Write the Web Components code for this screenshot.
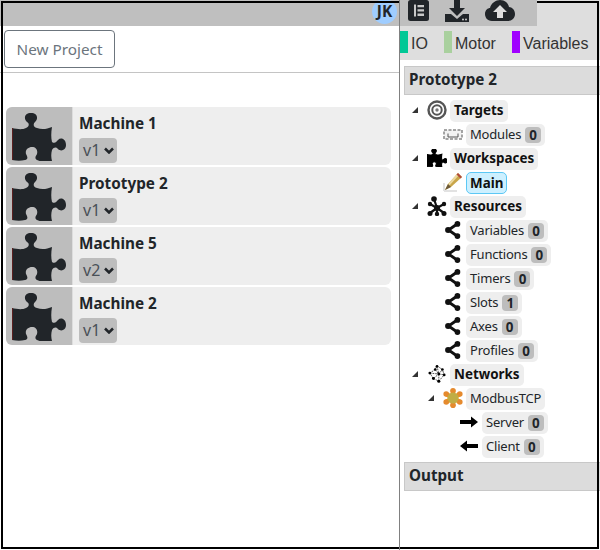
<!DOCTYPE html>
<html>
<head>
<meta charset="utf-8">
<style>
  html, body { margin: 0; padding: 0; background: #fff; }
  body { font-family: "Noto Sans", sans-serif; color: #212529; }
</style>
</head>
<body>
<app-shell>
  <project-list slot="left">
    <project-card name="Machine 1" version="v1"></project-card>
    <project-card name="Prototype 2" version="v1"></project-card>
    <project-card name="Machine 5" version="v2"></project-card>
    <project-card name="Machine 2" version="v1"></project-card>
  </project-list>
  <side-panel slot="right" title="Prototype 2">
    <tree-row level="0" open icon="target" label="Targets" strong></tree-row>
    <tree-row level="1" icon="module" label="Modules" count="0"></tree-row>
    <tree-row level="0" open icon="piece" label="Workspaces" strong></tree-row>
    <tree-row level="1" icon="pencil" label="Main" strong selected></tree-row>
    <tree-row level="0" open icon="hub" label="Resources" strong></tree-row>
    <tree-row level="1" icon="share" label="Variables" count="0"></tree-row>
    <tree-row level="1" icon="share" label="Functions" count="0"></tree-row>
    <tree-row level="1" icon="share" label="Timers" count="0"></tree-row>
    <tree-row level="1" icon="share" label="Slots" count="1"></tree-row>
    <tree-row level="1" icon="share" label="Axes" count="0"></tree-row>
    <tree-row level="1" icon="share" label="Profiles" count="0"></tree-row>
    <tree-row level="0" open icon="mesh" label="Networks" strong></tree-row>
    <tree-row level="1" open icon="flower" label="ModbusTCP"></tree-row>
    <tree-row level="2" icon="right" label="Server" count="0"></tree-row>
    <tree-row level="2" icon="left" label="Client" count="0"></tree-row>
  </side-panel>
</app-shell>

<script>
const PUZZLE = 'M0 15 C5 16 10 17 14 15 C18 13 17 10 15 9 C11 5 13 0 19 0 C25 0 27 5 23 9 C21 11 21 14 25 15 C30 17 35 16 40 14 C39 20 39 25 40 29 C43 31 44 29 46 27 C49 24 54 26 54 32 C54 37 49 39 46 36 C44 34 42 34 40 37 C39 41 39 44 40 48 C34 49 29 49 25 47 C22 45 24 43 25 41 C26 37 24 34 20 34 C16 34 13 37 14 41 C15 43 17 46 13 47 C9 48 5 48 0 47 Z';

const ICONS = {
  puzzle: `<svg viewBox="0 0 54 48" width="54" height="48"><path fill="#212529" d="${PUZZLE}"/><path d="M.5 15V47" stroke="#5a2020"/></svg>`,
  piece: `<svg viewBox="0 0 54 48" width="21" height="18"><path fill="#000" stroke="#000" stroke-width="3" d="${PUZZLE}"/></svg>`,
  book: `<svg viewBox="0 0 21 21" width="21" height="21"><rect width="21" height="21" rx="2.500" fill="#212529"/><path d="M6 4.500h2v12H6zM9.500 5h6.500v2.300H9.500zM9.500 9.300h6.500v2.300H9.500zM9.500 13.600h6.500v2.300H9.500z" fill="#c8c8c8"/></svg>`,
  download: `<svg viewBox="0 0 24 22" width="24" height="22"><path fill="#212529" d="M9 0h6v8h5l-8 8-8-8h5z"/><path fill="#212529" d="M0 14h6l6 5 6-5h6v8H0z"/><circle cx="18" cy="19.500" r="1" fill="#ccc"/><circle cx="21" cy="19.500" r="1" fill="#ccc"/></svg>`,
  cloud: `<svg viewBox="0 0 30 21" width="30" height="21"><path fill="#212529" d="M7 21 C2 21 0 17 0 14 C0 10 3 8 5 8 C6 3 11 0 15 0 C20 0 23 3 24 7 C27 7 30 10 30 14 C30 18 27 21 23 21 Z"/><path fill="#ddd" d="M15 5 L22 12 H18 V18 H12 V12 H8 Z"/></svg>`,
  target: `<svg viewBox="0 0 20 20" width="20" height="20"><circle cx="10" cy="10" r="8.500" fill="none" stroke="#555" stroke-width="2.400"/><circle cx="10" cy="10" r="4.700" fill="none" stroke="#555" stroke-width="2"/><circle cx="10" cy="10" r="1.700" fill="#777"/></svg>`,
  module: `<svg viewBox="0 0 20 11" width="20" height="11"><rect x="1" y="1" width="18" height="9" fill="#f2f2f2" stroke="#888" stroke-width="1.500" stroke-dasharray="3 1.500"/><path d="M5 8h10M5 8V4.500M15 8V4.500" stroke="#555" fill="none"/></svg>`,
  hub: `<svg viewBox="0 0 20 20" width="20" height="20"><path stroke="#111" stroke-width="2.200" d="M7 3 10 12M10 12 3 8M10 12 17 8M10 12 3 17M10 12 17 17M10 12 10 18"/><g fill="#111"><circle cx="7" cy="3" r="2.800"/><circle cx="10" cy="12" r="3"/><circle cx="3" cy="8" r="2.200"/><circle cx="17" cy="8" r="2.200"/><circle cx="3" cy="17.500" r="2.500"/><circle cx="17" cy="17.500" r="2.500"/><circle cx="10" cy="18" r="2.200"/></g></svg>`,
  pencil: `<svg viewBox="0 0 20 20" width="20" height="20"><path d="M1 19h13M1 11v8" stroke="#e2e2e2" stroke-width="2"/><path d="M2 18 5 12 15 1 19 5 8 15z" fill="#c9a64a"/><path d="M5 12 15 1l1.500 1.500L6.500 13.500z" fill="#ecd9a0"/><path d="M2 18 5 12 8 15z" fill="#6d5a3a"/><path d="M15 1 19 5 17.500 6.500 13.500 2.500z" fill="#b04a3a"/></svg>`,
  share: `<svg viewBox="0 0 18 20" width="16" height="18"><path stroke="#111" stroke-width="3.200" fill="none" d="M14 3 4 10 14 17"/><circle cx="14" cy="3.200" r="3.200" fill="#111"/><circle cx="3.500" cy="10" r="3.400" fill="#111"/><circle cx="14" cy="16.800" r="3.200" fill="#111"/></svg>`,
  mesh: `<svg viewBox="0 0 20 20" width="18" height="18"><path stroke="#444" stroke-width="1" stroke-dasharray="2 1" fill="none" d="M10 1 16 5 18 11 12 18 6 15 2 9 8 5zM8 5 12 10 6 15M12 10 16 5M12 10 18 11M12 10 12 18M2 9 12 10M10 1 12 10"/><g fill="#000"><circle cx="10" cy="1.500" r="1.500"/><circle cx="16" cy="5" r="1.500"/><circle cx="18" cy="11" r="1.500"/><circle cx="12" cy="18" r="1.700"/><circle cx="6" cy="15" r="1.600"/><circle cx="2" cy="9" r="1.500"/><circle cx="12" cy="10" r="1.600"/><circle cx="8" cy="5" r="1.500"/></g></svg>`,
  flower: `<svg viewBox="0 0 20 20" width="20" height="20"><path stroke="#e8a020" stroke-width="4.500" d="M10 2V18M3 6 17 14M3 14 17 6"/><g fill="#e58a2e"><circle cx="10" cy="2.800" r="2.800"/><circle cx="10" cy="17.200" r="2.800"/><circle cx="3.200" cy="6" r="2.800"/><circle cx="16.800" cy="6" r="2.800"/><circle cx="3.200" cy="14" r="2.800"/><circle cx="16.800" cy="14" r="2.800"/></g><circle cx="10" cy="10" r="5.500" fill="#c0ad45"/></svg>`,
  right: `<svg viewBox="0 0 18 12" width="18" height="12"><path fill="#000" d="M0 4h11V.5L18 6l-7 5.500V8H0z"/></svg>`,
  left: `<svg viewBox="0 0 18 12" width="18" height="12"><path fill="#000" d="M18 4H7V.5L0 6l7 5.500V8h11z"/></svg>`
};

// page frame with the two columns, the black outline goes over them
class AppShell extends HTMLElement {
  constructor () {
    super();
    this.attachShadow({mode: 'open'});
    this.shadowRoot.innerHTML = `
      <style>
        :host { display: grid; grid-template-columns: 400px 1fr; width: 600px; height: 550px; position: relative; overflow: hidden; }
        .left, .right { min-width: 0; }
        .outline { position: absolute; left: 1px; top: 1px; width: 598px; height: 548px; box-sizing: border-box; border: 2px solid #000; pointer-events: none; }
        .divider { position: absolute; left: 399px; top: 0; bottom: 0; width: 1px; background: #808080; }
      </style>
      <div class="left"><slot name="left"></slot></div>
      <div class="right"><slot name="right"></slot></div>
      <div class="outline"></div>
      <div class="divider"></div>
    `;
  }
}

class ProjectList extends HTMLElement {
  constructor () {
    super();
    this.attachShadow({mode: 'open'});
    this.shadowRoot.innerHTML = `
      <style>
        :host { display: block; }
        .bar { height: 26px; background: #bfbfbf; display: flex; justify-content: flex-end; }
        .avatar { width: 25px; height: 25px; margin: -1px 3px 0 0; border-radius: 50%; background: #9fcdff; color: #212529; font: bold 15.5px/24px "Noto Sans", sans-serif; text-align: center; }
        .actions { height: 47px; box-sizing: border-box; padding: 4px 4px; border-bottom: 1px solid #c4c4c4; }
        button { display: block; width: 111px; height: 38px; padding: 0; background: #fff; border: 1px solid #6c757d; border-radius: 4px; color: #6c757d; font: 15.3px "Noto Sans", sans-serif; }
        .cards { display: flex; flex-direction: column; gap: 2px; padding: 34px 9px 0 6px; }
      </style>
      <div class="bar"><div class="avatar">JK</div></div>
      <div class="actions"><button>New Project</button></div>
      <div class="cards"><slot></slot></div>
    `;
  }
}

class ProjectCard extends HTMLElement {
  constructor () {
    super();
    this.attachShadow({mode: 'open'});
    this.shadowRoot.innerHTML = `
      <style>
        :host { display: flex; height: 58px; background: #eee; border-radius: 6px; overflow: hidden; }
        .thumb { width: 66px; flex: none; background: #bdbdbd; border-right: 1px solid #ddd; display: flex; align-items: center; justify-content: center; }
        .thumb svg { display: block; margin-top: 2px; }
        .body { padding: 6px 0 0 6px; }
        .name { font: bold 15.3px/20px "Noto Sans", sans-serif; color: #212529; }
        .ver { display: flex; align-items: center; gap: 4px; width: 38px; height: 25px; margin-top: 5px; box-sizing: border-box; padding: 0 0 2px 4px; background: #bdbdbd; border-radius: 4px; color: #495057; font: 16px "Noto Sans", sans-serif; }
        .ver svg { display: block; margin-top: 2px; }
      </style>
      <div class="thumb">${ICONS.puzzle}</div>
      <div class="body">
        <div class="name">${this.getAttribute('name')}</div>
        <div class="ver">${this.getAttribute('version')}<svg viewBox="0 0 10 7" width="10" height="7"><path d="M1 1.500 5 5.500 9 1.500" fill="none" stroke="#212529" stroke-width="2.500"/></svg></div>
      </div>
    `;
  }
}

// toolbar, palette and the tree with the output header below it
class SidePanel extends HTMLElement {
  constructor () {
    super();
    this.attachShadow({mode: 'open'});
    this.shadowRoot.innerHTML = `
      <style>
        :host { display: block; }
        .top { background: #dedede; height: 60px; }
        .tools { width: 137px; height: 26px; background: #bfbfbf; display: flex; gap: 16px; padding-left: 8px; box-sizing: border-box; position: relative; z-index: 1; }
        .tools span { display: block; height: 22px; }
        .tools svg { display: block; }
        .chips { display: flex; height: 34px; padding-top: 5px; box-sizing: border-box; font: 16px/26px "Liberation Sans", sans-serif; color: #333; }
        .chip { display: flex; gap: 3px; }
        .chip i { display: block; width: 8px; height: 22px; }
        .head { margin: 6px 0 0 4px; height: 29px; box-sizing: border-box; background: #dcdcdc; border: 1px solid #c8c8c8; border-right: 0; padding-left: 4px; font: bold 15.2px/25px "Noto Sans", sans-serif; color: #212529; }
        .tree { display: flex; flex-direction: column; gap: 2px; height: 367px; box-sizing: border-box; padding-top: 5px; }
      </style>
      <div class="top">
        <div class="tools"><span>${ICONS.book}</span><span>${ICONS.download}</span><span>${ICONS.cloud}</span></div>
        <div class="chips">
          <div class="chip" style="width:44px"><i style="background:#00c896"></i>IO</div>
          <div class="chip" style="width:68px"><i style="background:#a9d09e"></i>Motor</div>
          <div class="chip"><i style="background:#a000ff"></i>Variables</div>
        </div>
      </div>
      <div class="head">${this.getAttribute('title')}</div>
      <div class="tree"><slot></slot></div>
      <div class="head" style="margin-top:0">Output</div>
    `;
  }
}

class TreeRow extends HTMLElement {
  constructor () {
    super();
    this.attachShadow({mode: 'open'});
    const level = Number(this.getAttribute('level'));
    const count = this.getAttribute('count');
    const arrow = this.hasAttribute('open') ? '<svg viewBox="0 0 6 6" width="6" height="6"><path d="M6 0V6H0z" fill="#333"/></svg>' : '';
    this.shadowRoot.innerHTML = `
      <style>
        :host { display: flex; align-items: center; height: 22px; padding-left: ${12 + level * 16}px; font: 13px/16px "Noto Sans", sans-serif; letter-spacing: -0.2px; color: #212529; }
        .arrow { width: 6px; flex: none; display: flex; margin-top: -2px; }
        .icon { width: 20px; margin: -2px 0 0 9px; flex: none; display: flex; justify-content: center; align-items: center; }
        .icon svg { display: block; }
        .pill { display: flex; align-items: center; gap: 4px; height: 22px; margin-left: 3px; padding: 0 4px 2px; box-sizing: border-box; background: #eee; border-radius: 5px; white-space: nowrap; }
        :host([strong]) { font-size: 13.4px; letter-spacing: 0; }
        :host([strong]) .pill { font-weight: bold; color: #111; }
        :host([selected]) .pill { background: #cdf0ff; border: 1px solid #5cc8f5; padding: 0 3px; }
        .count { background: #bdbdbd; border-radius: 4px; width: 16px; height: 16px; margin-top: 2px; text-align: center; font-weight: bold; letter-spacing: 0; font-size: 13.4px; }
      </style>
      <span class="arrow">${arrow}</span>
      <span class="icon">${ICONS[this.getAttribute('icon')]}</span>
      <span class="pill">${this.getAttribute('label')}${count !== null ? `<span class="count">${count}</span>` : ''}</span>
    `;
  }
}

customElements.define('app-shell', AppShell);
customElements.define('project-list', ProjectList);
customElements.define('project-card', ProjectCard);
customElements.define('side-panel', SidePanel);
customElements.define('tree-row', TreeRow);
</script>
</body>
</html>
